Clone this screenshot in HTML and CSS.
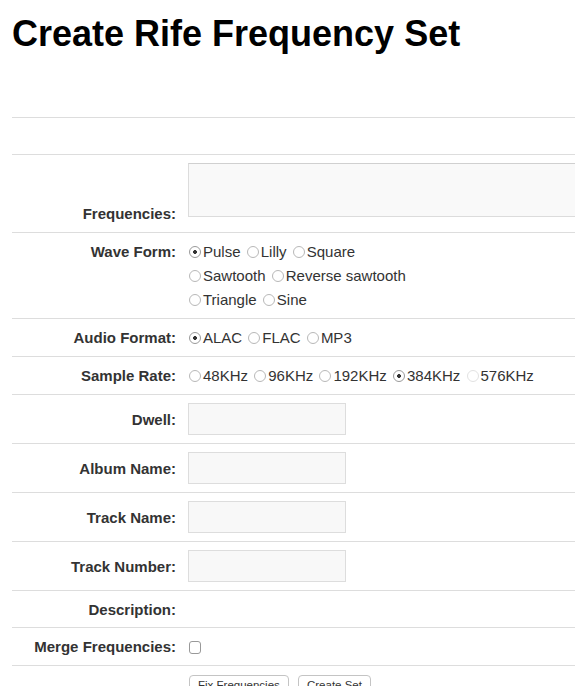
FILE: index.html
```html
<!DOCTYPE html>
<html>
<head>
<meta charset="utf-8">
<title>Create Rife Frequency Set</title>
<link rel="stylesheet" href="styles.css">
</head>
<body>
<h1 class="title">Create Rife Frequency Set</h1>
<table class="form">
  <tr class="row-empty"><th>&nbsp;</th><td>&nbsp;</td></tr>
  <tr class="row-freq">
    <th>Frequencies:</th>
    <td><textarea class="area"></textarea></td>
  </tr>
  <tr class="row-radio row-wave">
    <th>Wave Form:</th>
    <td>
      <div class="opts">
        <label class="opt"><input type="radio" name="wave" checked>Pulse</label>
        <label class="opt"><input type="radio" name="wave">Lilly</label>
        <label class="opt"><input type="radio" name="wave">Square</label>
      </div>
      <div class="opts">
        <label class="opt"><input type="radio" name="wave">Sawtooth</label>
        <label class="opt"><input type="radio" name="wave">Reverse sawtooth</label>
      </div>
      <div class="opts">
        <label class="opt"><input type="radio" name="wave">Triangle</label>
        <label class="opt"><input type="radio" name="wave">Sine</label>
      </div>
    </td>
  </tr>
  <tr class="row-radio">
    <th>Audio Format:</th>
    <td>
      <div class="opts">
        <label class="opt"><input type="radio" name="fmt" checked>ALAC</label>
        <label class="opt"><input type="radio" name="fmt">FLAC</label>
        <label class="opt"><input type="radio" name="fmt">MP3</label>
      </div>
    </td>
  </tr>
  <tr class="row-radio">
    <th>Sample Rate:</th>
    <td>
      <div class="opts">
        <label class="opt"><input type="radio" name="rate">48KHz</label>
        <label class="opt"><input type="radio" name="rate">96KHz</label>
        <label class="opt"><input type="radio" name="rate">192KHz</label>
        <label class="opt"><input type="radio" name="rate" checked>384KHz</label>
        <label class="opt"><input type="radio" name="rate" disabled>576KHz</label>
      </div>
    </td>
  </tr>
  <tr class="row-input">
    <th>Dwell:</th>
    <td><input class="field" type="text"></td>
  </tr>
  <tr class="row-input">
    <th>Album Name:</th>
    <td><input class="field" type="text"></td>
  </tr>
  <tr class="row-input">
    <th>Track Name:</th>
    <td><input class="field" type="text"></td>
  </tr>
  <tr class="row-input">
    <th>Track Number:</th>
    <td><input class="field" type="text"></td>
  </tr>
  <tr class="row-plain">
    <th>Description:</th>
    <td></td>
  </tr>
  <tr class="row-check">
    <th>Merge Frequencies:</th>
    <td><input class="check" type="checkbox"></td>
  </tr>
  <tr class="row-buttons">
    <th></th>
    <td>
      <button class="btn" type="button">Fix Frequencies</button>
      <button class="btn" type="button">Create Set</button>
    </td>
  </tr>
</table>
</body>
</html>
```

FILE: styles.css
```css
html, body {
  overflow: hidden;
}

body {
  margin: 0;
  padding: 12px 0 0 12px;
  font-family: "Liberation Sans", Arial, Helvetica, sans-serif;
  color: #333;
  background: #fff;
}

.title {
  margin: 0;
  font-size: 36px;
  line-height: 44px;
  font-weight: bold;
  color: #000;
}

.form {
  margin-top: 61px;
  width: 760px;
  border-collapse: collapse;
  font-size: 15px;
  line-height: 24px;
}

.form tr {
  border-top: 1px solid #dddddd;
}

.form th {
  width: 156px;
  padding: 7px 8px 6px 8px;
  text-align: right;
  font-weight: bold;
  color: #333;
  vertical-align: middle;
  white-space: nowrap;
}

.form td {
  padding: 7px 4px 6px 4px;
  vertical-align: middle;
}

.row-empty th,
.row-empty td {
  padding: 6px 4px 6px 4px;
}

.row-freq th {
  vertical-align: bottom;
  padding-bottom: 6px;
}

.row-freq td {
  padding: 8px 4px 15px 4px;
}

.area {
  display: block;
  box-sizing: border-box;
  width: 100%;
  height: 54px;
  margin: 0;
  border: 1px solid #dcdcdc;
  border-top-color: #d0d0d0;
  background: #f9f9f9;
  resize: none;
}

.row-wave th {
  vertical-align: top;
}

.opts {
  white-space: nowrap;
  color: #333;
}

.opt {
  margin-right: 1px;
}

.opt input {
  -webkit-appearance: none;
  appearance: none;
  box-sizing: border-box;
  width: 12px;
  height: 12px;
  margin: 0 2px 0 1px;
  border: 1px solid #b8b8b8;
  border-radius: 50%;
  background: #fff;
  vertical-align: -1px;
}

.opt input:checked {
  border-color: #9a9a9a;
  background: radial-gradient(circle, #333 0, #333 1.6px, #fff 2.2px);
}

.opt input:disabled {
  border-color: #e2e2e2;
}

.row-input td {
  padding: 8px 4px 8px 4px;
}

.row-plain th,
.row-plain td {
  padding-bottom: 5px;
}

.field {
  display: block;
  box-sizing: border-box;
  width: 158px;
  height: 32px;
  margin: 0;
  border: 1px solid #dddddd;
  background: #f8f8f8;
}

.check {
  -webkit-appearance: none;
  appearance: none;
  box-sizing: border-box;
  width: 12px;
  height: 13px;
  margin: 0 0 0 1px;
  border: 1px solid #999;
  border-radius: 3px;
  background: #fff;
  vertical-align: -2px;
}

.row-buttons td {
  padding-top: 9px;
  vertical-align: top;
}

.btn {
  font-family: "Liberation Sans", Arial, Helvetica, sans-serif;
  font-size: 11.5px;
  line-height: 16px;
  color: #333;
  background: #fff;
  border: 1px solid #c4c4c4;
  border-radius: 4px;
  padding: 1px 8px;
  margin: 0 4px 0 1px;
  vertical-align: top;
}
```
